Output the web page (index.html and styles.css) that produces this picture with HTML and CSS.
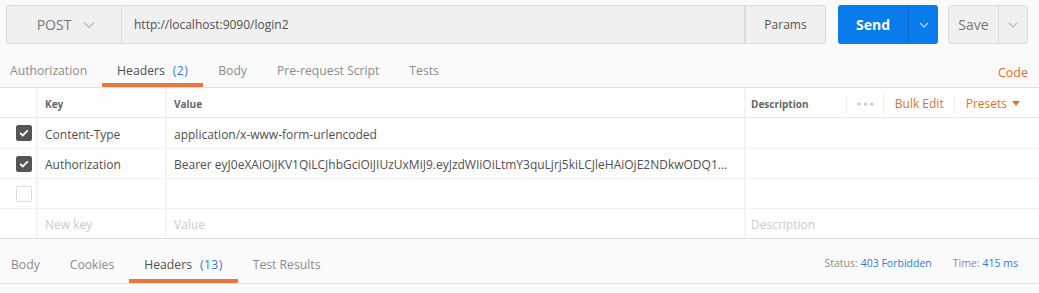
FILE: index.html
```html
<!DOCTYPE html>
<html lang="en">

<head>
    <meta charset="UTF-8">
    <title>Postman - login2</title>
    <link rel="stylesheet" href="styles.css">
</head>

<body>
    <div class="urlbar">
        <div class="method">POST <span class="chev">
            <svg width="12" height="8" viewBox="0 0 12 8"><path d="M1 1.5l5 5 5-5" fill="none" stroke="#b8b8b8" stroke-width="1.2"/></svg>
        </span></div>
        <div class="url">http://localhost:9090/login2</div>
        <div class="params">Params</div>
        <div class="send">
            <span class="send-label">Send</span>
            <span class="send-drop"><svg width="10" height="6" viewBox="0 0 10 6"><path d="M1 1l4 4 4-4" fill="none" stroke="#b9d8fb" stroke-width="1.2"/></svg></span>
        </div>
        <div class="save">
            <span class="save-label">Save</span>
            <span class="save-drop"><svg width="10" height="6" viewBox="0 0 10 6"><path d="M1 1l4 4 4-4" fill="none" stroke="#b8b8b8" stroke-width="1.2"/></svg></span>
        </div>
    </div>

    <div class="tabs req-tabs">
        <span class="tab">Authorization</span>
        <span class="tab active">Headers<span class="count">(2)</span></span>
        <span class="tab">Body</span>
        <span class="tab">Pre-request Script</span>
        <span class="tab">Tests</span>
        <span class="spacer"></span>
        <span class="code-link">Code</span>
    </div>

    <div class="kv">
        <div class="row head">
            <div class="cell chk"></div>
            <div class="cell key">Key</div>
            <div class="cell val">Value</div>
            <div class="cell desc">
                <span class="desc-title">Description</span>
                <span class="tool dots">
                    <svg width="17" height="4" viewBox="0 0 17 4"><circle cx="2" cy="2" r="1.6" fill="#c4c4c4"/><circle cx="8.5" cy="2" r="1.6" fill="#c4c4c4"/><circle cx="15" cy="2" r="1.6" fill="#c4c4c4"/></svg>
                </span>
                <span class="tool link">Bulk Edit</span>
                <span class="tool link last">Presets <svg class="caret" width="8" height="5" viewBox="0 0 8 5"><path d="M0 0h8L4 5z" fill="#e0702f"/></svg></span>
            </div>
        </div>
        <div class="row">
            <div class="cell chk"><span class="box on"><svg width="10" height="8" viewBox="0 0 10 8"><path d="M1.2 4l2.6 2.5L8.8 1.4" fill="none" stroke="#fff" stroke-width="1.8"/></svg></span></div>
            <div class="cell key">Content-Type</div>
            <div class="cell val">application/x-www-form-urlencoded</div>
            <div class="cell desc"></div>
        </div>
        <div class="row">
            <div class="cell chk"><span class="box on"><svg width="10" height="8" viewBox="0 0 10 8"><path d="M1.2 4l2.6 2.5L8.8 1.4" fill="none" stroke="#fff" stroke-width="1.8"/></svg></span></div>
            <div class="cell key">Authorization</div>
            <div class="cell val">Bearer eyJ0eXAiOiJKV1QiLCJhbGciOiJIUzUxMiJ9.eyJzdWIiOiLtmY3quLjrj5kiLCJleHAiOjE2NDkwODQ1...</div>
            <div class="cell desc"></div>
        </div>
        <div class="row">
            <div class="cell chk"><span class="box"></span></div>
            <div class="cell key"></div>
            <div class="cell val"></div>
            <div class="cell desc"></div>
        </div>
        <div class="row">
            <div class="cell chk"></div>
            <div class="cell key ph">New key</div>
            <div class="cell val ph">Value</div>
            <div class="cell desc ph">Description</div>
        </div>
    </div>

    <div class="tabs res-tabs">
        <span class="tab">Body</span>
        <span class="tab">Cookies</span>
        <span class="tab active">Headers<span class="count">(13)</span></span>
        <span class="tab">Test Results</span>
        <span class="spacer"></span>
        <span class="meta">Status: <b>403 Forbidden</b></span>
        <span class="meta">Time: <b>415 ms</b></span>
    </div>
</body>

</html>
```

FILE: styles.css
```css
body {
    font-family: "Open Sans", "Liberation Sans", sans-serif;
    margin: 0;
    background: #fafafa;
    color: #505050;
    font-size: 12px;
}

.urlbar {
    display: flex;
    height: 39px;
    padding: 5px 11px 0 6px;
}

.method,
.url,
.params,
.save {
    background: #f0f0f0;
    border: 1px solid #dcdcdc;
    box-sizing: border-box;
    display: flex;
    align-items: center;
}

.method {
    width: 116px;
    justify-content: center;
    font-size: 14px;
    color: #777;
    border-radius: 3px 0 0 3px;
    padding-left: 4px;
}

.chev {
    display: flex;
    margin-left: 12px;
}

.url {
    flex: 1;
    border-left: none;
    padding-left: 12px;
    font-size: 12px;
    color: #505050;
}

.params {
    width: 81px;
    border-left: 1px solid #dcdcdc;
    justify-content: center;
    border-radius: 0 3px 3px 0;
    color: #555;
}

.send {
    display: flex;
    width: 100px;
    margin-left: 12px;
    background: #097bed;
    border-radius: 3px;
    color: #fff;
}

.send-label {
    width: 70px;
    display: flex;
    align-items: center;
    justify-content: center;
    font-weight: 700;
    font-size: 14px;
    border-right: 1px solid #0d69c8;
}

.send-drop,
.save-drop {
    flex: 1;
    display: flex;
    align-items: center;
    justify-content: center;
}

.save {
    width: 80px;
    margin-left: 10px;
    border-radius: 3px;
    padding: 0;
}

.save-label {
    width: 49px;
    height: 100%;
    display: flex;
    align-items: center;
    justify-content: center;
    font-size: 14px;
    color: #777;
    border-right: 1px solid #dcdcdc;
}

.save-drop {
    height: 100%;
}

.tabs {
    display: flex;
    align-items: stretch;
}

.req-tabs {
    height: 43px;
    border-bottom: 1px solid #e0e0e0;
}

.tab {
    display: flex;
    align-items: center;
    padding: 13px 15px 0;
    font-size: 12.2px;
    color: #8c8c8c;
    border-bottom: 4px solid transparent;
    white-space: pre;
}

.tab:first-child {
    padding-left: 10px;
}

.tab.active {
    color: #505050;
    border-bottom-color: #e8773e;
}

.count {
    color: #2f7ccf;
    margin-left: 8px;
    letter-spacing: 0.4px;
}

.spacer {
    flex: 1;
}

.code-link {
    display: flex;
    align-items: center;
    padding: 14px 11px 0 0;
    color: #e0702f;
    font-size: 12.5px;
}

.kv {
    background: #fff;
    border-bottom: 1px solid #e0e0e0;
}

.row {
    display: flex;
    height: 30px;
    box-sizing: border-box;
    border-top: 1px solid #f2f2f2;
}

.row.head {
    border-top: none;
    border-bottom: 1px solid #e6e6e6;
}

.row.head + .row {
    border-top: none;
}

.cell {
    display: flex;
    align-items: center;
    box-sizing: border-box;
    border-right: 2px solid #f4f4f4;
    padding: 2px 0 0 7px;
    white-space: nowrap;
    overflow: hidden;
}

.chk {
    width: 38px;
    justify-content: center;
    padding: 0 0 0 12px;
}

.key {
    width: 129px;
}

.val {
    width: 579px;
}

.desc {
    flex: 1;
    border-right: none;
    padding-left: 5px;
}

.head .cell {
    font-size: 10px;
    font-weight: 700;
    color: #666;
}

.desc-title {
    flex: 1;
}

.tool {
    display: flex;
    align-items: center;
    height: 20px;
    padding: 0 10px 0 11px;
    border-left: 1px solid #eee;
    font-size: 12px;
    font-weight: 400;
    color: #e0702f;
}

.tool.last {
    padding-right: 19px;
}

.dots {
    width: 37px;
    box-sizing: border-box;
    padding: 0 0 0 10px;
}

.caret {
    margin-left: 5px;
}

.box {
    width: 16px;
    height: 16px;
    box-sizing: border-box;
    border-radius: 2px;
    border: 1px solid #ddd;
    background: #fff;
    display: flex;
    align-items: center;
    justify-content: center;
}

.box.on {
    background: #555;
    border-color: #555;
}

.ph {
    color: #cbcbcb;
}

.res-tabs {
    height: 44px;
    border-bottom: 1px solid #e0e0e0;
}

.res-tabs .tab {
    padding-top: 11px;
}

.res-tabs .tab:first-child {
    padding-left: 11px;
}

.meta {
    display: flex;
    align-items: center;
    padding-top: 4px;
    margin-right: 21px;
    font-size: 10.5px;
    color: #8c8c8c;
}

.meta b {
    font-weight: 400;
    color: #2f7ccf;
    margin-left: 3px;
}
```
